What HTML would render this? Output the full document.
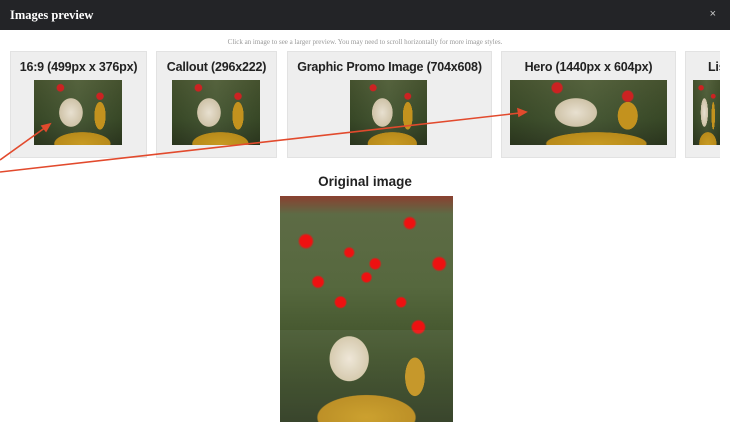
<!DOCTYPE html>
<html><head><style>
body{margin:0;width:730px;height:438px;overflow:hidden;background:#fff;font-family:"Liberation Sans",sans-serif;position:relative}
.hdr{position:absolute;left:0;top:0;width:730px;height:30px;background:#232427;color:#fff}
.hdr b{position:absolute;left:10px;top:8px;font-family:"Liberation Serif",serif;font-size:12.5px}
.hdr span{position:absolute;right:14px;top:8px;font-size:11px;color:#ccc}
.hint{position:absolute;top:38px;left:0;width:730px;text-align:center;font-family:"Liberation Serif",serif;font-size:7px;color:#999}
.card{position:absolute;top:51px;height:107px;background:#eee;border:1px solid #e2e2e2;box-sizing:border-box}
.card h3{margin:0;position:absolute;top:8px;left:0;right:0;text-align:center;font-size:12.5px;color:#222;white-space:nowrap;letter-spacing:-0.2px}
.ph{position:absolute;overflow:hidden;background:
radial-gradient(ellipse 22% 36% at 42% 50%,#e8e0d0 0,#cfc3a8 60%,transparent 62%),
radial-gradient(ellipse 45% 25% at 55% 98%,#c79a22 0,#b88a1a 70%,transparent 72%),
radial-gradient(ellipse 9% 30% at 75% 55%,#c3921e 0,#c3921e 70%,transparent 72%),
radial-gradient(circle at 30% 12%,#c22 0,#c22 4%,transparent 5%),
radial-gradient(circle at 75% 25%,#c22 0,#c22 4%,transparent 5%),
linear-gradient(90deg,rgba(0,0,0,.1),rgba(255,255,255,.05),rgba(0,0,0,.1)),
linear-gradient(#4c5a33,#3d4f2a 60%,#2e3a20)}
.orig{position:absolute;left:280px;top:196px;width:173px;height:226px;background:
radial-gradient(ellipse 16% 14% at 40% 72%,#eee6d6 0,#d4c8ab 70%,transparent 72%),
radial-gradient(ellipse 40% 14% at 50% 98%,#c99b22 0,#b98a1a 70%,transparent 72%),
radial-gradient(ellipse 8% 12% at 78% 80%,#c3921e 0,#c3921e 70%,transparent 72%),
radial-gradient(circle at 15% 20%,#e11 0,#e11 2.5%,transparent 3.5%),
radial-gradient(circle at 55% 30%,#e11 0,#e11 2.5%,transparent 3.5%),
radial-gradient(circle at 70% 47%,#e11 0,#e11 2.5%,transparent 3.5%),
radial-gradient(circle at 35% 47%,#e11 0,#e11 3%,transparent 4%),
radial-gradient(circle at 75% 12%,#e11 0,#e11 2%,transparent 3%),
radial-gradient(circle at 92% 30%,#e11 0,#e11 2.5%,transparent 3.5%),
radial-gradient(circle at 40% 25%,#e11 0,#e11 2%,transparent 3%),
radial-gradient(circle at 22% 38%,#e11 0,#e11 2.5%,transparent 3.5%),
radial-gradient(circle at 50% 36%,#e11 0,#e11 2.5%,transparent 3.5%),
radial-gradient(circle at 80% 58%,#e11 0,#e11 3%,transparent 4%),
linear-gradient(#8a4030,#5d6b45 8%,#56683e 40%,#3f5129 70%,#2d3a1f)}
.fade{position:absolute;left:0;top:330px;width:730px;height:108px;background:rgba(255,255,255,.06)}
</style></head><body>
<div class="hdr"><b>Images preview</b><span>×</span></div>
<div class="hint">Click an image to see a larger preview. You may need to scroll horizontally for more image styles.</div>
<div class="card" style="left:10px;width:137px"><h3>16:9 (499px x 376px)</h3></div>
<div class="ph" style="left:34px;top:80px;width:88px;height:65px"></div>
<div class="card" style="left:156px;width:121px"><h3>Callout (296x222)</h3></div>
<div class="ph" style="left:172px;top:80px;width:88px;height:65px"></div>
<div class="card" style="left:287px;width:205px"><h3>Graphic Promo Image (704x608)</h3></div>
<div class="ph" style="left:350px;top:80px;width:77px;height:65px"></div>
<div class="card" style="left:501px;width:175px"><h3>Hero (1440px x 604px)</h3></div>
<div class="ph" style="left:510px;top:80px;width:157px;height:65px"></div>
<div class="card" style="left:685px;width:60px"><h3 style="text-align:left;left:22px">Lis</h3></div>
<div class="ph" style="left:693px;top:80px;width:27px;height:65px"></div>
<div style="position:absolute;left:720px;top:51px;width:10px;height:110px;background:#fff"></div>
<div style="position:absolute;top:174px;left:0;width:730px;text-align:center;font-size:13.5px;font-weight:bold;color:#222">Original image</div>
<div class="orig"></div>
<div class="fade"></div>
<svg width="730" height="438" style="position:absolute;left:0;top:0">
<g stroke="#e24a2d" stroke-width="1.6" fill="#e24a2d">
<line x1="0" y1="160" x2="46" y2="127"/><polygon points="50,124 42,126 46,131"/>
<line x1="0" y1="172" x2="520" y2="113"/><polygon points="526,112 518,109 519,116"/>
</g></svg>
</body></html>
